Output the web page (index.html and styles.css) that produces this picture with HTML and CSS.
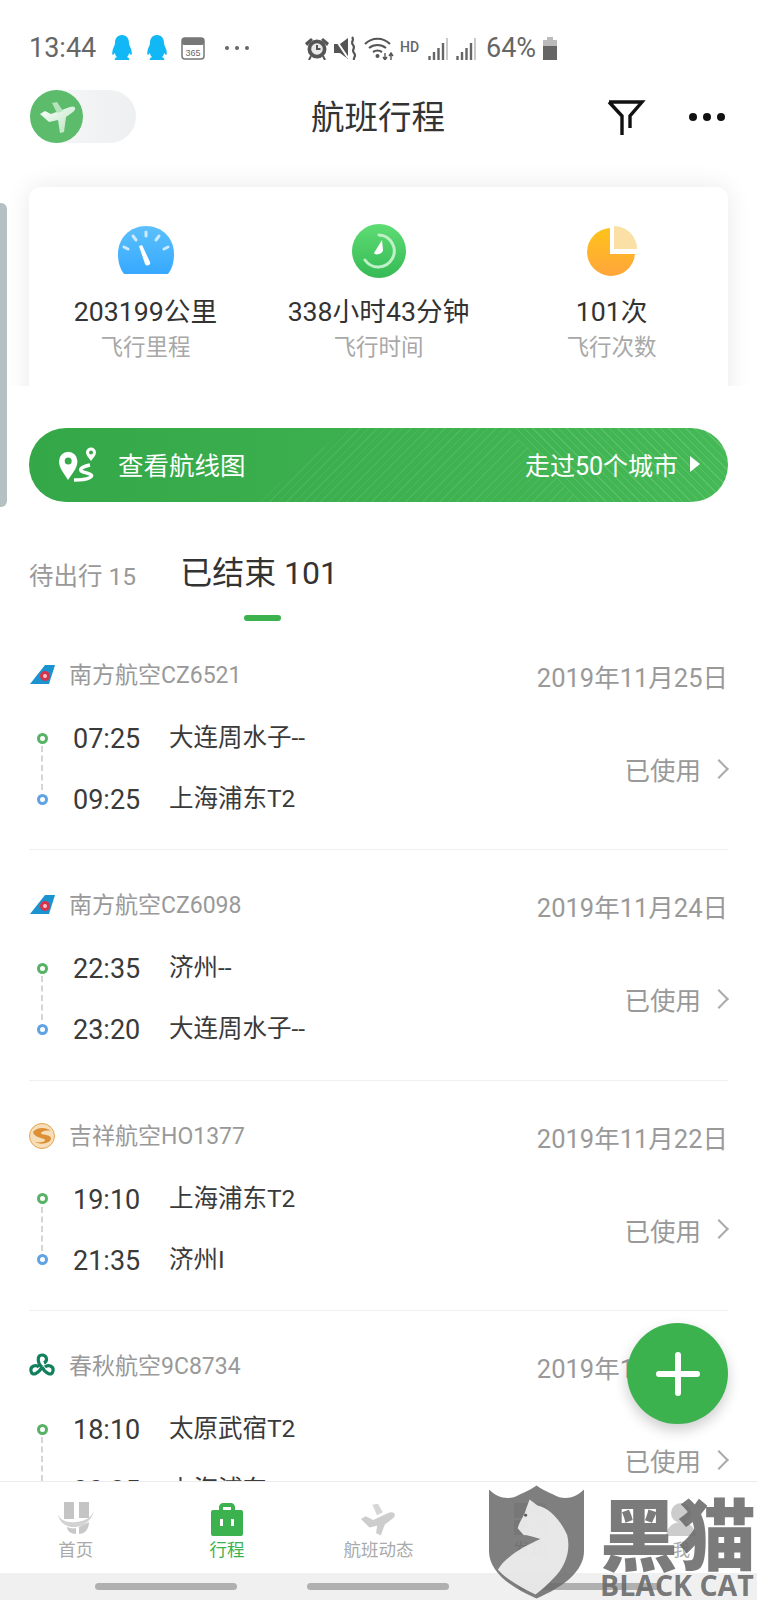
FILE: index.html
```html
<!DOCTYPE html>
<html lang="zh-CN">
<head>
    <meta charset="UTF-8">
    <meta name="viewport" content="width=device-width, initial-scale=1.0">
    <title>航班行程</title>
    <link rel="stylesheet" href="styles.css">
</head>
<body>
    <div class="phone">
        <!-- status bar -->
        <div class="status-bar">
            <span class="clock">13:44</span>
            <svg class="qq first" viewBox="0 0 22 26"><path d="M11 0c5 0 7 4 7 8 0 2 1 3 2 6 1 3 1 6 0 6l-2-2c0 2-1 3-2 4 2 1 3 2 2 3H4c-1-1 0-2 2-3-1-1-2-2-2-4l-2 2c-1 0-1-3 0-6 1-3 2-4 2-6 0-4 2-8 7-8z" fill="#12b7f5"/></svg>
            <svg class="qq" viewBox="0 0 22 26"><path d="M11 0c5 0 7 4 7 8 0 2 1 3 2 6 1 3 1 6 0 6l-2-2c0 2-1 3-2 4 2 1 3 2 2 3H4c-1-1 0-2 2-3-1-1-2-2-2-4l-2 2c-1 0-1-3 0-6 1-3 2-4 2-6 0-4 2-8 7-8z" fill="#12b7f5"/></svg>
            <svg class="cal" viewBox="0 0 24 23"><rect x="1" y="1" width="22" height="21" rx="3" fill="#fff" stroke="#777" stroke-width="1.5"/><rect x="1" y="1" width="22" height="7" rx="2" fill="#777"/><text x="12" y="19" text-anchor="middle" class="cal-text">365</text></svg>
            <span class="status-dots"><i></i><i></i><i></i></span>
            <svg class="alarm" viewBox="0 0 24 24"><circle cx="12" cy="13" r="9.5" fill="#555"/><circle cx="12" cy="13" r="5.8" fill="#e8e8e8"/><path d="M12 9v4h3.5" stroke="#555" stroke-width="2" fill="none"/><path d="M0 7l6-5 2 2-6 6zM24 7l-6-5-2 2 6 6z" fill="#555"/><path d="M6 20l-2 4M18 20l2 4" stroke="#555" stroke-width="2"/></svg>
            <svg class="mute" viewBox="0 0 24 24"><path d="M1 8h6l8-6v21l-8-6H1z" fill="#555"/><path d="M1 1l14 21" stroke="#fff" stroke-width="2"/><path d="M19 1c3 3-2 5 1 8s-2 5 1 8-1 4 0 7" stroke="#555" stroke-width="2.2" fill="none"/></svg>
            <svg class="wifi" viewBox="0 0 30 24"><path d="M1 8c7-7 18-7 25 0M5 12c5-4 12-4 17 0M9 16c3-2 6-2 9 0" stroke="#555" stroke-width="2.2" fill="none"/><circle cx="13.500" cy="20" r="2" fill="#555"/><path d="M21 17v7M19 21l2 3 2-3M27 24v-7M25 20l2-3 2 3" stroke="#555" stroke-width="1.4" fill="none"/></svg>
            <span class="hd">HD</span>
            <svg class="signal" viewBox="0 0 20 23"><path d="M1.500 23v-4M6 23v-8M10.500 23v-12" stroke="#666" stroke-width="2.4"/><path d="M15 23V6" stroke="#666" stroke-width="2.4"/><path d="M19 23V1" stroke="#bbb" stroke-width="1.6"/></svg>
            <svg class="signal second" viewBox="0 0 20 23"><path d="M1.500 23v-4M6 23v-8M10.500 23v-12" stroke="#666" stroke-width="2.4"/><path d="M15 23V6" stroke="#666" stroke-width="2.4"/><path d="M19 23V1" stroke="#bbb" stroke-width="1.6"/></svg>
            <span class="percent">64%</span>
            <svg class="battery" viewBox="0 0 16 23"><rect x="5" y="0" width="6" height="3" fill="#bbb"/><rect x="1" y="3" width="14" height="20" fill="#bbb"/><rect x="1" y="9" width="14" height="14" fill="#666"/></svg>
        </div>

        <!-- header -->
        <div class="header">
            <div class="toggle">
                <span class="toggle-knob">
                    <svg viewBox="0 0 53 53"><defs><linearGradient id="planeFill" x1="0" y1="0" x2="1" y2="1"><stop offset="0" stop-color="#fff"/><stop offset="1" stop-color="#b5e3bd"/></linearGradient></defs><path d="M10 24l5-3 6 3 19-7c5-2 7 2 3 5l-7 5-2 15-4 1-2-13-9 2z" fill="url(#planeFill)"/><path d="M22 13l5-1 6 9-6 2z" fill="#b5e3bd"/></svg>
                </span>
            </div>
            <div class="title">航班行程</div>
            <svg class="filter-icon" viewBox="0 0 60 50"><path d="M14 11h33L35 25v12M27 44V25L14 11" fill="none" stroke="#111" stroke-width="3.4"/></svg>
            <span class="more-dots"><i></i><i></i><i></i></span>
        </div>

        <!-- stats card -->
        <div class="stats-wrap">
            <div class="stats-card">
                <div class="stat">
                    <svg class="stat-icon" viewBox="0 0 56 50"><defs><linearGradient id="gaugeBlue" x1="0" y1="0" x2="0" y2="1"><stop offset="0" stop-color="#5cc0fb"/><stop offset="1" stop-color="#36a9ff"/></linearGradient></defs><path d="M6 48C2 43 0 36 0 28 0 12 12 0 28 0s28 12 28 28c0 8-2 15-6 20z" fill="url(#gaugeBlue)"/><path d="M21 20l3-1 8 17c1 3-3 5-5 2z" fill="#fff"/><path d="M28 6v4M15 10l3 4M6 21l4 2M41 10l-3 4M50 21l-4 2" stroke="#cdeaff" stroke-width="3" stroke-linecap="round"/></svg>
                    <div class="stat-value">203199公里</div>
                    <div class="stat-label">飞行里程</div>
                </div>
                <div class="stat">
                    <svg class="stat-icon" viewBox="0 0 54 54"><defs><linearGradient id="clockGreen" x1="0" y1="0" x2="0" y2="1"><stop offset="0" stop-color="#5fdc74"/><stop offset="1" stop-color="#35ba55"/></linearGradient></defs><circle cx="27" cy="27" r="27" fill="url(#clockGreen)"/><path d="M27 11a16 16 0 1 1-14 25" fill="none" stroke="#bff0c8" stroke-width="3" stroke-linecap="round"/><path d="M30 16l1 10c0 4-8 6-9 3z" fill="#fff"/></svg>
                    <div class="stat-value">338小时43分钟</div>
                    <div class="stat-label">飞行时间</div>
                </div>
                <div class="stat">
                    <svg class="stat-icon pie" viewBox="0 0 50 50"><defs><linearGradient id="pieOrange" x1="0" y1="0" x2="0" y2="1"><stop offset="0" stop-color="#ffc31a"/><stop offset="1" stop-color="#ffa53c"/></linearGradient></defs><path d="M23 2v26h25A24 24 0 1 1 23 2z" fill="url(#pieOrange)"/><path d="M27 0a23 23 0 0 1 23 23H27z" fill="#fbe0a6"/></svg>
                    <div class="stat-value">101次</div>
                    <div class="stat-label">飞行次数</div>
                </div>
            </div>
        </div>

        <!-- route map banner -->
        <div class="route-banner">
            <svg class="route-icon" viewBox="0 0 38 36"><path d="M9 33C3 24 0 20 0 14a9.200 9.200 0 0 1 18.400 0c0 6-3 10-9.400 19z" fill="#fff"/><circle cx="9.200" cy="14" r="3.500" fill="#38aa4c"/><path d="M32 14c-3-4-5-6-5-8.500a5 5 0 0 1 10 0c0 2.500-2 4.500-5 8.500z" fill="#fff"/><circle cx="32" cy="5.500" r="2" fill="#38aa4c"/><path d="M31 18c-9 2-12 5-7 7 7 2 12 3 6 6-4 2-10 2-15 2" fill="none" stroke="#fff" stroke-width="3.400"/></svg>
            <span class="route-text">查看航线图</span>
            <span class="route-count">走过50个城市</span>
            <span class="route-arrow"></span>
        </div>

        <!-- tabs -->
        <div class="tabs">
            <div class="tab-row">
                <span class="tab">待出行 15</span>
                <span class="tab tab-active">已结束 101</span>
            </div>
            <div class="tab-line"></div>
        </div>

        <!-- flight list -->
        <div class="flight-list">
            <div class="flight">
                <div class="flight-head">
                    <svg class="airline-logo" viewBox="0 0 26 20"><path d="M1 19L16 0h10l-6 19z" fill="#1a93cf"/><circle cx="16" cy="11" r="5" fill="#d8334a"/><circle cx="16" cy="11" r="2" fill="#f3c6cc"/></svg>
                    <span class="airline">南方航空CZ6521</span>
                    <span class="flight-date">2019年11月25日</span>
                </div>
                <div class="flight-body">
                    <div class="route">
                        <div class="stop"><i class="dot dot-green"></i><span class="time">07:25</span><span class="place">大连周水子--</span></div>
                        <div class="stop"><i class="dot dot-blue"></i><span class="time">09:25</span><span class="place">上海浦东T2</span></div>
                    </div>
                    <span class="used">已使用</span><span class="chevron"></span>
                </div>
            </div>

            <div class="flight">
                <div class="flight-head">
                    <svg class="airline-logo" viewBox="0 0 26 20"><path d="M1 19L16 0h10l-6 19z" fill="#1a93cf"/><circle cx="16" cy="11" r="5" fill="#d8334a"/><circle cx="16" cy="11" r="2" fill="#f3c6cc"/></svg>
                    <span class="airline">南方航空CZ6098</span>
                    <span class="flight-date">2019年11月24日</span>
                </div>
                <div class="flight-body">
                    <div class="route">
                        <div class="stop"><i class="dot dot-green"></i><span class="time">22:35</span><span class="place">济州--</span></div>
                        <div class="stop"><i class="dot dot-blue"></i><span class="time">23:20</span><span class="place">大连周水子--</span></div>
                    </div>
                    <span class="used">已使用</span><span class="chevron"></span>
                </div>
            </div>

            <div class="flight">
                <div class="flight-head">
                    <svg class="airline-logo" viewBox="0 0 26 26"><circle cx="13" cy="13" r="12.500" fill="#f6dfb8" stroke="#e4a14f"/><path d="M4 9c4-5 13-5 18-1-5-1-9 0-10 2s9 1 10 5-9 8-16 4c5 1 10 0 10-2S5 15 4 9z" fill="#dd8f35"/></svg>
                    <span class="airline">吉祥航空HO1377</span>
                    <span class="flight-date">2019年11月22日</span>
                </div>
                <div class="flight-body">
                    <div class="route">
                        <div class="stop"><i class="dot dot-green"></i><span class="time">19:10</span><span class="place">上海浦东T2</span></div>
                        <div class="stop"><i class="dot dot-blue"></i><span class="time">21:35</span><span class="place">济州I</span></div>
                    </div>
                    <span class="used">已使用</span><span class="chevron"></span>
                </div>
            </div>

            <div class="flight">
                <div class="flight-head">
                    <svg class="airline-logo" viewBox="0 0 26 26"><path d="M13 14C8 10 8 2 13 2c5 0 6 6 2 8M13 14c-3 6-10 10-11 4-1-5 5-7 8-4M13 14c3 6 10 10 11 4 1-5-5-7-8-4" fill="none" stroke="#12805c" stroke-width="3.200"/></svg>
                    <span class="airline">春秋航空9C8734</span>
                    <span class="flight-date">2019年11月20日</span>
                </div>
                <div class="flight-body">
                    <div class="route">
                        <div class="stop"><i class="dot dot-green"></i><span class="time">18:10</span><span class="place">太原武宿T2</span></div>
                        <div class="stop"><i class="dot dot-blue"></i><span class="time">20:25</span><span class="place">上海浦东T2</span></div>
                    </div>
                    <span class="used">已使用</span><span class="chevron"></span>
                </div>
            </div>
        </div>

        <!-- bottom tabs -->
        <div class="tabbar">
            <div class="tabbar-item">
                <svg class="tabbar-icon" viewBox="0 0 40 34"><path d="M8 0h10v17H8zM23 0h10v16H23z" fill="#c4c4c4"/><path d="M2 12c2 6 8 9 18 8 10-1 16-5 18-12-1 8-8 16-18 17C10 26 3 20 2 12z" fill="#d2d2d2"/><path d="M11 25c3 1 6 2 9 1v6c-5 0-9-3-9-7zM23 25l10-5c0 7-4 12-10 12z" fill="#c8c8c8"/></svg>
                <span>首页</span>
            </div>
            <div class="tabbar-item tabbar-active">
                <svg class="tabbar-icon" viewBox="0 0 34 34"><path d="M9 8V5c0-2 2-4 4-4h8c2 0 4 2 4 4v3h-4V5h-8v3z" fill="#3cb24f"/><rect x="1" y="8" width="32" height="26" rx="2" fill="#3cb24f"/><rect x="10" y="17" width="3" height="7" fill="#fff"/><rect x="21" y="17" width="3" height="7" fill="#fff"/></svg>
                <span>行程</span>
            </div>
            <div class="tabbar-item">
                <svg class="tabbar-icon" viewBox="0 0 42 34"><path d="M2 17l5-3 8 4 15-7c6-3 10 1 6 5l-9 7-4 11-5-2 1-8-8 2z" fill="#cdcdcd"/><path d="M14 2l6-1 5 9-6 3z" fill="#d6d6d6"/></svg>
                <span>航班动态</span>
            </div>
            <div class="tabbar-item">
                <svg class="tabbar-icon" viewBox="0 0 34 34"><rect x="1" y="1" width="15" height="15" fill="#c8c8c8"/><rect x="18" y="1" width="15" height="15" fill="#ddd"/><rect x="1" y="18" width="15" height="15" fill="#c8c8c8"/><rect x="18" y="18" width="15" height="15" fill="#ddd"/></svg>
                <span>发现</span>
            </div>
            <div class="tabbar-item">
                <svg class="tabbar-icon" viewBox="0 0 34 34"><circle cx="17" cy="11" r="10" fill="#ccc"/><path d="M2 34c1-10 8-14 15-14s14 4 15 14z" fill="#ccc"/></svg>
                <span>我</span>
            </div>
        </div>

        <!-- system nav -->
        <div class="nav-bar">
            <span class="nav-pill"></span>
            <span class="nav-pill"></span>
            <span class="nav-pill"></span>
        </div>

        <div class="side-handle"></div>

        <div class="fab">
            <svg viewBox="0 0 44 44"><path d="M22 3v38M3 22h38" stroke="#fff" stroke-width="6" stroke-linecap="round"/></svg>
        </div>

        <!-- watermark -->
        <div class="watermark">
            <svg class="wm-shield" viewBox="0 0 98 114"><path d="M1 4c8 8 20 12 31 5 7-3 13-6 17-9 4 3 10 6 17 9 11 7 23 3 31-5v62c0 20-20 36-48 48C21 102 1 86 1 66z" fill="rgba(105,105,105,0.85)"/><path d="M42 14l8 6c12 2 24 16 30 30 4 16-2 32-14 44-6 6-12 12-18 16-12-6-28-14-38-25 6-11 24-23 43-31-7-2-13-4-17-4l-6-7c2-7 7-13 8-18z" fill="#fff" fill-opacity="0.82"/><circle cx="38" cy="30" r="1.500" fill="#555"/></svg>
            <div class="wm-text">
                <div class="wm-cn">黑猫</div>
                <div class="wm-en">BLACK CAT</div>
            </div>
        </div>
    </div>
</body>
</html>
```

FILE: styles.css
```css
* {
    box-sizing: border-box;
}

body {
    margin: 0;
    background: #fff;
    font-family: Roboto, 'Noto Sans CJK SC', sans-serif;
    color: #333;
}

.phone {
    position: relative;
    width: 757px;
    height: 1600px;
    overflow: hidden;
    display: flex;
    flex-direction: column;
    background: #fff;
}

/* status bar */
.status-bar {
    height: 84px;
    margin-top: 6px;
    flex-shrink: 0;
    padding-left: 29px;
    display: flex;
    align-items: center;
    color: #666;
}

.clock {
    font-size: 27px;
    width: 68px;
}

.qq {
    width: 22px;
    height: 26px;
    margin-left: 13px;
}

.qq.first {
    margin-left: 14px;
}

.cal {
    width: 24px;
    height: 23px;
    margin-left: 13px;
}

.cal-text {
    font-size: 9px;
    font-family: 'Liberation Sans', sans-serif;
    fill: #666;
}

.status-dots {
    display: flex;
    gap: 6px;
    margin-left: 20px;
}

.status-dots i {
    width: 4px;
    height: 4px;
    border-radius: 50%;
    background: #666;
}

.alarm {
    width: 24px;
    height: 24px;
    margin-left: 56px;
}

.mute {
    width: 24px;
    height: 24px;
    margin-left: 4px;
}

.wifi {
    width: 30px;
    height: 24px;
    margin-left: 7px;
}

.hd {
    font-size: 14px;
    width: 22px;
    margin-left: 6px;
    margin-top: -3px;
    font-weight: 500;
}

.signal {
    width: 20px;
    height: 23px;
    margin-left: 6px;
}

.signal.second {
    margin-left: 8px;
}

.percent {
    font-size: 27px;
    width: 52px;
    margin-left: 10px;
}

.battery {
    width: 16px;
    height: 23px;
    margin-left: 4px;
}

/* header */
.header {
    height: 53px;
    flex-shrink: 0;
    padding: 0 30px;
    display: flex;
    align-items: center;
    position: relative;
}

.toggle {
    width: 106px;
    height: 53px;
    border-radius: 27px;
    background: linear-gradient(90deg, #f7f8f8, #eeeff0);
}

.toggle-knob {
    display: block;
    width: 53px;
    height: 53px;
    border-radius: 50%;
    background: #5cbc6b;
}

.toggle-knob svg {
    display: block;
    width: 53px;
    height: 53px;
}

.title {
    font-size: 33.5px;
    width: 134px;
    margin: -4px 0 0 175px;
    white-space: nowrap;
    color: #333;
}

.filter-icon {
    width: 60px;
    height: 50px;
    margin: -2px 0 0 150px;
}

.more-dots {
    display: flex;
    gap: 6px;
    margin-left: 34px;
}

.more-dots i {
    width: 8px;
    height: 8px;
    border-radius: 50%;
    background: #111;
}

/* stats */
.stats-wrap {
    height: 243px;
    flex-shrink: 0;
    padding: 44px 29px 0;
    overflow: hidden;
}

.stats-card {
    height: 240px;
    border-radius: 12px;
    background: #fff;
    box-shadow: 0 0 26px rgba(0, 0, 0, 0.09);
    padding-top: 37px;
    display: flex;
}

.stat {
    flex: 1;
    display: flex;
    flex-direction: column;
    align-items: center;
}

.stat-icon {
    width: 56px;
    height: 54px;
}

.stat-icon.pie {
    width: 50px;
    height: 50px;
    margin: 2px 0;
}

.stat-value {
    font-size: 26.7px;
    line-height: 34px;
    margin-top: 17px;
    white-space: nowrap;
    color: #333;
}

.stat-label {
    font-size: 22.5px;
    line-height: 32px;
    margin-top: 2px;
    color: #a8a8a8;
}

/* route banner */
.route-banner {
    position: relative;
    overflow: hidden;
    height: 74px;
    margin: 42px 29px 0;
    flex-shrink: 0;
    border-radius: 37px;
    padding: 0 28px 0 30px;
    display: flex;
    align-items: center;
    color: #fff;
    background: linear-gradient(90deg, #34a748, #45b956);
}

.route-banner::before,
.route-banner::after {
    content: '';
    position: absolute;
    left: 0;
    top: 0;
    right: 0;
    bottom: 0;
}

.route-banner::before {
    background: repeating-linear-gradient(135deg, rgba(255, 255, 255, 0.08) 0 1px, transparent 1px 6px);
    clip-path: polygon(227px 100%, 319px 0, 478px 0, 551px 100%);
}

.route-banner::after {
    background: repeating-linear-gradient(45deg, rgba(255, 255, 255, 0.12) 0 1px, transparent 1px 6px);
    clip-path: polygon(478px 0, 100% 0, 100% 100%, 551px 100%);
}

.route-banner > * {
    position: relative;
    z-index: 1;
}

.route-icon {
    width: 38px;
    height: 36px;
}

.route-text {
    font-size: 25.5px;
    margin: -3px 0 0 21px;
    flex: 1;
}

.route-count {
    font-size: 25px;
    margin-top: -3px;
    white-space: nowrap;
}

.route-arrow {
    width: 0;
    height: 0;
    margin-left: 12px;
    margin-top: -2px;
    border-left: 10px solid #fff;
    border-top: 8px solid transparent;
    border-bottom: 8px solid transparent;
}

/* tabs */
.tabs {
    height: 118px;
    flex-shrink: 0;
    padding: 50px 29px 0;
}

.tab-row {
    display: flex;
    align-items: center;
    height: 44px;
}

.tab {
    font-size: 24.5px;
    color: #999;
    white-space: nowrap;
    margin-top: 1px;
}

.tab-active {
    font-size: 32px;
    color: #333;
    margin: -8px 0 0 44px;
}

.tab-line {
    width: 37px;
    height: 6px;
    margin: 19px 0 0 215px;
    border-radius: 3px;
    background: #3cb24f;
}

/* flights */
.flight-list {
    flex: 1;
    min-height: 0;
    overflow: hidden;
    padding: 0 29px;
}

.flight {
    height: 230.4px;
    padding-top: 42px;
    border-bottom: 1px solid #f0f0f0;
}

.flight-head {
    height: 26px;
    display: flex;
    align-items: center;
}

.airline-logo {
    width: 26px;
    height: 26px;
}

.airline {
    font-size: 23px;
    color: #999;
    margin: -4px 0 0 14px;
    flex: 1;
    white-space: nowrap;
}

.flight-date {
    font-size: 25.5px;
    color: #999;
    margin-top: 1px;
    white-space: nowrap;
}

.flight-body {
    margin-top: 34px;
    display: flex;
    align-items: center;
    color: #999;
}

.route {
    flex: 1;
    display: flex;
    flex-direction: column;
    gap: 29px;
}

.stop {
    height: 32px;
    display: flex;
    align-items: center;
    position: relative;
}

.stop:first-child::after {
    content: '';
    position: absolute;
    left: 12px;
    top: 24px;
    height: 44px;
    border-left: 2px dashed #d5d5d5;
}

.dot {
    width: 11px;
    height: 11px;
    margin-left: 8px;
    border-radius: 50%;
    border: 3px solid;
    background: #fff;
}

.dot-green {
    border-color: #57b266;
}

.dot-blue {
    border-color: #5fa2e6;
}

.time {
    font-size: 27px;
    color: #3a3a3a;
    width: 96px;
    margin: 2px 0 0 25px;
}

.place {
    font-size: 24.5px;
    color: #3a3a3a;
    margin-top: -5px;
    white-space: nowrap;
}

.used {
    font-size: 25.5px;
    color: #999;
}

.chevron {
    width: 14px;
    height: 14px;
    margin-left: 11px;
    margin-right: 2px;
    border-top: 2px solid #aaa;
    border-right: 2px solid #aaa;
    transform: rotate(45deg);
}

/* bottom tabs */
.tabbar {
    height: 92px;
    flex-shrink: 0;
    border-top: 1px solid #ececec;
    background: #fff;
    display: flex;
    padding: 20px 0 0;
}

.tabbar-item {
    flex: 1;
    display: flex;
    flex-direction: column;
    align-items: center;
    font-size: 17.5px;
    color: #aaa;
    line-height: 24px;
}

.tabbar-icon {
    width: 40px;
    height: 34px;
    margin-bottom: 2px;
}

.tabbar-active {
    color: #3cb24f;
}

.nav-bar {
    height: 27px;
    flex-shrink: 0;
    background: #f0f0f0;
    padding: 10px 95px 0;
    display: flex;
    gap: 70px;
}

.nav-pill {
    width: 142px;
    height: 7px;
    border-radius: 4px;
    background: #b0b0b0;
}

/* overlays */
.side-handle {
    position: absolute;
    left: 0;
    top: 203px;
    width: 7px;
    height: 304px;
    border-radius: 0 6px 6px 0;
    background: #b4c0c2;
}

.fab {
    position: absolute;
    left: 627px;
    top: 1323px;
    width: 101px;
    height: 101px;
    border-radius: 50%;
    background: #3cb24f;
    box-shadow: 0 6px 14px rgba(0, 0, 0, 0.2);
    display: flex;
    align-items: center;
    justify-content: center;
}

.fab svg {
    width: 44px;
    height: 44px;
}

.watermark {
    position: absolute;
    left: 488px;
    top: 1485px;
    display: flex;
    gap: 15px;
}

.wm-shield {
    width: 97px;
    height: 114px;
}

.wm-cn {
    font-size: 78px;
    line-height: 76px;
    margin-top: 8px;
    font-weight: 900;
    font-family: 'Noto Sans CJK SC', sans-serif;
    color: rgba(105, 105, 105, 0.88);
    white-space: nowrap;
}

.wm-en {
    font-size: 28.5px;
    line-height: 26px;
    margin-top: 3px;
    font-weight: 700;
    font-family: 'Open Sans', sans-serif;
    color: rgba(105, 105, 105, 0.9);
    white-space: nowrap;
}
```
